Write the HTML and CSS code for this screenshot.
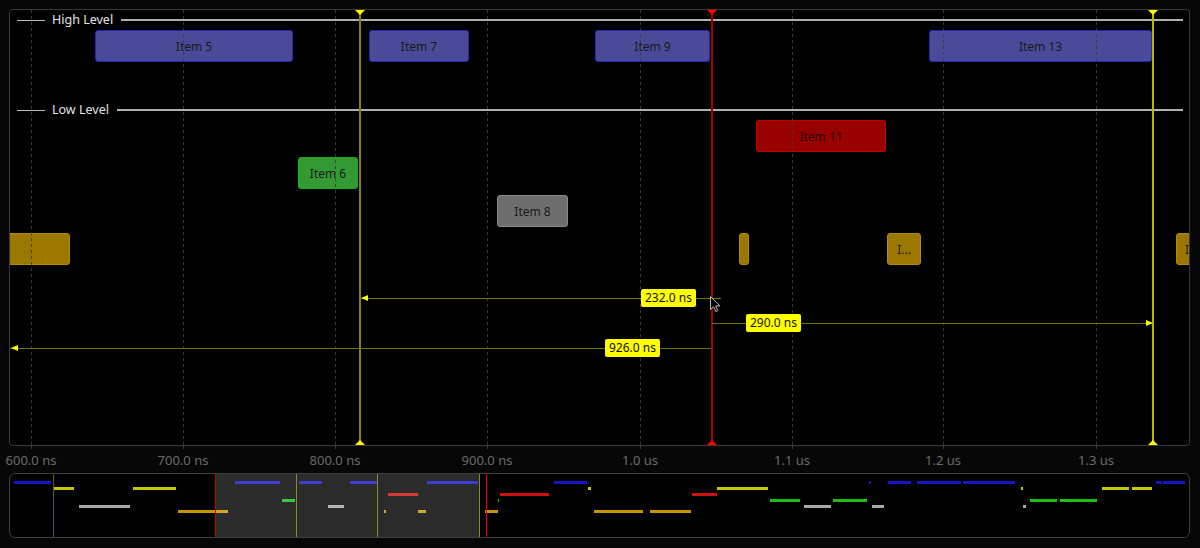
FILE: index.html
```html
<!DOCTYPE html>
<html>
<head>
<meta charset="utf-8">
<link rel="stylesheet" href="styles.css">
</head>
<body>
<div class="app">
  <div class="panel">
    <div class="grid" style="left:21px"></div>
    <div class="grid" style="left:173px"></div>
    <div class="grid" style="left:325px"></div>
    <div class="grid" style="left:477px"></div>
    <div class="grid" style="left:630px"></div>
    <div class="grid" style="left:782px"></div>
    <div class="grid" style="left:933px"></div>
    <div class="grid" style="left:1086px"></div>

    <div class="lane lane-high"><span class="lane-stub"></span><span class="lane-name">High Level</span><span class="lane-rule"></span></div>
    <div class="lane lane-low"><span class="lane-stub"></span><span class="lane-name">Low Level</span><span class="lane-rule"></span></div>

    <div class="item blue" style="left:85px;top:20px;width:198px">Item 5</div>
    <div class="item blue" style="left:359px;top:20px;width:100px">Item 7</div>
    <div class="item blue" style="left:585px;top:20px;width:115px">Item 9</div>
    <div class="item blue" style="left:919px;top:20px;width:223px">Item 13</div>

    <div class="item red" style="left:746px;top:110px;width:130px">Item 11</div>
    <div class="item green" style="left:288px;top:147px;width:60px">Item 6</div>
    <div class="item gray" style="left:487px;top:185px;width:71px">Item 8</div>
    <div class="item amber" style="left:-4px;top:223px;width:64px"></div>
    <div class="item amber" style="left:729px;top:223px;width:10px"></div>
    <div class="item amber" style="left:877px;top:223px;width:34px">I...</div>
    <div class="item amber item-edge" style="left:1166px;top:223px;width:34px">It</div>

    <div class="cursor cur-a" style="left:349px"><span class="tri tri-top"></span><span class="tri tri-bot"></span></div>
    <div class="cursor cur-red" style="left:701px"><span class="tri tri-top"></span><span class="tri tri-bot"></span></div>
    <div class="cursor cur-b" style="left:1142px"><span class="tri tri-top"></span><span class="tri tri-bot"></span></div>

    <div class="measure arrow-left" style="left:350px;top:288px;width:361px"></div>
    <div class="badge" style="left:631px;top:279px">232.0 ns</div>

    <div class="measure arrow-right" style="left:702px;top:313px;width:441px"></div>
    <div class="badge" style="left:736px;top:304px">290.0 ns</div>

    <div class="measure arrow-left" style="left:0px;top:338px;width:701px"></div>
    <div class="badge" style="left:595px;top:329px">926.0 ns</div>

    <svg class="pointer" width="12" height="17" viewBox="0 0 12 17"><path d="M0.5 0.5 L0.5 13.5 L3.6 10.6 L5.8 15.6 L7.8 14.7 L5.7 9.9 L10 9.9 Z" fill="#000" stroke="#bbb" stroke-width="1"/></svg>
  </div>

  <div class="axis">
    <span class="tick" style="left:22px"></span><span class="tick-label" style="left:22px">600.0 ns</span>
    <span class="tick" style="left:174px"></span><span class="tick-label" style="left:174px">700.0 ns</span>
    <span class="tick" style="left:326px"></span><span class="tick-label" style="left:326px">800.0 ns</span>
    <span class="tick" style="left:478px"></span><span class="tick-label" style="left:478px">900.0 ns</span>
    <span class="tick" style="left:631px"></span><span class="tick-label" style="left:631px">1.0 us</span>
    <span class="tick" style="left:783px"></span><span class="tick-label" style="left:783px">1.1 us</span>
    <span class="tick" style="left:934px"></span><span class="tick-label" style="left:934px">1.2 us</span>
    <span class="tick" style="left:1087px"></span><span class="tick-label" style="left:1087px">1.3 us</span>
  </div>

  <div class="minimap">
    <span class="mb mb-blue" style="left:4px;width:37px"></span>
    <span class="mb mb-blue" style="left:225px;width:45px"></span>
    <span class="mb mb-blue" style="left:289px;width:23px"></span>
    <span class="mb mb-blue" style="left:340px;width:27px"></span>
    <span class="mb mb-blue" style="left:417px;width:51px"></span>
    <span class="mb mb-blue" style="left:544px;width:33px"></span>
    <span class="mb mb-blue" style="left:859px;width:2px"></span>
    <span class="mb mb-blue" style="left:878px;width:23px"></span>
    <span class="mb mb-blue" style="left:907px;width:44px"></span>
    <span class="mb mb-blue" style="left:953px;width:52px"></span>
    <span class="mb mb-blue" style="left:1146px;width:6px"></span>
    <span class="mb mb-blue" style="left:1153px;width:22px"></span>

    <span class="mb mb-yellow" style="left:43px;width:21px"></span>
    <span class="mb mb-yellow" style="left:123px;width:43px"></span>
    <span class="mb mb-yellow" style="left:578px;width:3px"></span>
    <span class="mb mb-yellow" style="left:707px;width:51px"></span>
    <span class="mb mb-yellow" style="left:1011px;width:2px"></span>
    <span class="mb mb-yellow" style="left:1092px;width:27px"></span>
    <span class="mb mb-yellow" style="left:1122px;width:20px"></span>

    <span class="mb mb-red" style="left:378px;width:30px"></span>
    <span class="mb mb-red" style="left:490px;width:49px"></span>
    <span class="mb mb-red" style="left:682px;width:25px"></span>

    <span class="mb mb-green" style="left:272px;width:13px"></span>
    <span class="mb mb-green" style="left:488px;width:1px"></span>
    <span class="mb mb-green" style="left:760px;width:30px"></span>
    <span class="mb mb-green" style="left:823px;width:34px"></span>
    <span class="mb mb-green" style="left:1020px;width:27px"></span>
    <span class="mb mb-green" style="left:1050px;width:26px"></span>
    <span class="mb mb-green" style="left:1076px;width:11px"></span>

    <span class="mb mb-gray" style="left:69px;width:51px"></span>
    <span class="mb mb-gray" style="left:318px;width:16px"></span>
    <span class="mb mb-gray" style="left:794px;width:27px"></span>
    <span class="mb mb-gray" style="left:862px;width:12px"></span>
    <span class="mb mb-gray" style="left:1013px;width:3px"></span>

    <span class="mb mb-amber" style="left:168px;width:50px"></span>
    <span class="mb mb-amber" style="left:374px;width:2px"></span>
    <span class="mb mb-amber" style="left:408px;width:8px"></span>
    <span class="mb mb-amber" style="left:475px;width:13px"></span>
    <span class="mb mb-amber" style="left:584px;width:49px"></span>
    <span class="mb mb-amber" style="left:640px;width:41px"></span>

    <span class="viewport"></span>

    <span class="mline ml-olive-dark" style="left:43px"></span>
    <span class="mline ml-red" style="left:205px"></span>
    <span class="mline ml-olive" style="left:286px"></span>
    <span class="mline ml-olive" style="left:367px"></span>
    <span class="mline ml-olive" style="left:469px"></span>
    <span class="mline ml-red-bright" style="left:476px"></span>
  </div>
</div>
</body>
</html>
```

FILE: styles.css
```css
* { box-sizing: border-box; }
html, body {
  margin: 0;
  padding: 0;
  background: #070707;
  width: 1200px;
  height: 548px;
  overflow: hidden;
}
body {
  font-family: "Noto Sans", "Open Sans", sans-serif;
  font-size: 12px;
  color: #ddd;
}
.app {
  display: flex;
  flex-direction: column;
  padding: 9px 10px 0 9px;
}
.panel {
  position: relative;
  height: 437px;
  background: #000;
  border: 1px solid #3a3a3a;
  border-radius: 4px;
  overflow: hidden;
}
.grid {
  position: absolute;
  top: 0;
  bottom: 0;
  width: 1px;
  background: repeating-linear-gradient(to bottom, #3c3c3c 0 3px, transparent 3px 6px);
  z-index: 3;
  opacity: 0.9;
}
.lane {
  position: absolute;
  left: 7px;
  right: 6px;
  height: 14px;
  display: flex;
  align-items: center;
  gap: 7px;
  z-index: 2;
}
.lane-high { top: 3px; }
.lane-low { top: 93px; }
.lane-stub {
  width: 28px;
  height: 1px;
  background: #bdbdbd;
}
.lane-rule {
  flex: 1;
  height: 2px;
  background: #b0b0b0;
  margin-left: 1px;
}
.lane-name {
  color: #e4e4e4;
  font-size: 12.5px;
  line-height: 14px;
}
.item {
  position: absolute;
  height: 32px;
  border-radius: 3px;
  border: 1px solid;
  display: flex;
  align-items: center;
  justify-content: center;
  color: #1a1a1a;
  font-size: 12px;
  white-space: nowrap;
  overflow: hidden;
  z-index: 1;
}
.item-edge { justify-content: flex-start; padding-left: 8px; }
.blue { background: #4a4a98; border-color: #2626b4; }
.red { background: #990000; border-color: #c00000; color: #250000; }
.green { background: #339a33; border-color: #1aad1a; }
.gray { background: #6e6e6e; border-color: #8c8c8c; }
.amber { background: #9a7800; border-color: #b38b00; }

.cursor {
  position: absolute;
  top: 0;
  bottom: 0;
  width: 2px;
  z-index: 4;
}
.cur-a { background: #858500; }
.cur-red { background: #a00000; }
.cur-b { background: #b8b800; }
.tri {
  position: absolute;
  left: 50%;
  width: 0;
  height: 0;
  border-left: 5px solid transparent;
  border-right: 5px solid transparent;
  transform: translateX(-50%);
}
.tri-top { top: 0; border-top: 5px solid #ffff00; }
.tri-bot { bottom: 0; border-bottom: 5px solid #ffff00; }
.cur-red .tri-top { border-top-color: #ff0000; }
.cur-red .tri-bot { border-bottom-color: #ff0000; }

.measure {
  position: absolute;
  height: 1px;
  background: #737300;
  z-index: 5;
}
.arrow-left::before,
.arrow-right::after {
  content: "";
  position: absolute;
  top: -3px;
  width: 0;
  height: 0;
  border-top: 3.5px solid transparent;
  border-bottom: 3.5px solid transparent;
}
.arrow-left::before { left: 1px; border-right: 7px solid #ffff00; }
.arrow-right::after { right: 0; border-left: 7px solid #ffff00; }

.badge {
  position: absolute;
  height: 18px;
  padding: 0 4px;
  background: #ffff00;
  color: #111;
  border-radius: 2px;
  font-size: 12px;
  line-height: 18px;
  white-space: nowrap;
  z-index: 6;
}
.pointer {
  position: absolute;
  left: 700px;
  top: 286px;
  z-index: 7;
}

.axis {
  position: relative;
  height: 27px;
}
.tick {
  position: absolute;
  top: 0;
  width: 1px;
  height: 5px;
  background: repeating-linear-gradient(to bottom, #3c3c3c 0 3px, transparent 3px 6px);
}
.tick-label {
  position: absolute;
  top: 5px;
  transform: translateX(-50%);
  color: #6a6a6a;
  font-size: 13px;
  line-height: 18px;
  white-space: nowrap;
}

.minimap {
  position: relative;
  height: 65px;
  background: #000;
  border: 1px solid #3e3e3e;
  border-radius: 6px;
  overflow: hidden;
}
.mb {
  position: absolute;
  height: 3px;
}
.mb-blue { top: 7px; background: #1616c8; }
.mb-yellow { top: 13px; background: #c8c800; }
.mb-red { top: 19px; background: #cc1010; }
.mb-green { top: 25px; background: #18c018; }
.mb-gray { top: 31px; background: #a8a8a8; }
.mb-amber { top: 36px; background: #c89400; }
.viewport {
  position: absolute;
  left: 205px;
  width: 264px;
  top: 0;
  bottom: 0;
  background: rgba(255, 255, 255, 0.17);
}
.mline {
  position: absolute;
  top: 0;
  bottom: 0;
  width: 1px;
}
.ml-olive-dark { background: #5c5c00; }
.ml-olive { background: #8a8a20; }
.ml-red { background: #c00000; }
.ml-red-bright { background: #e00000; }
```
